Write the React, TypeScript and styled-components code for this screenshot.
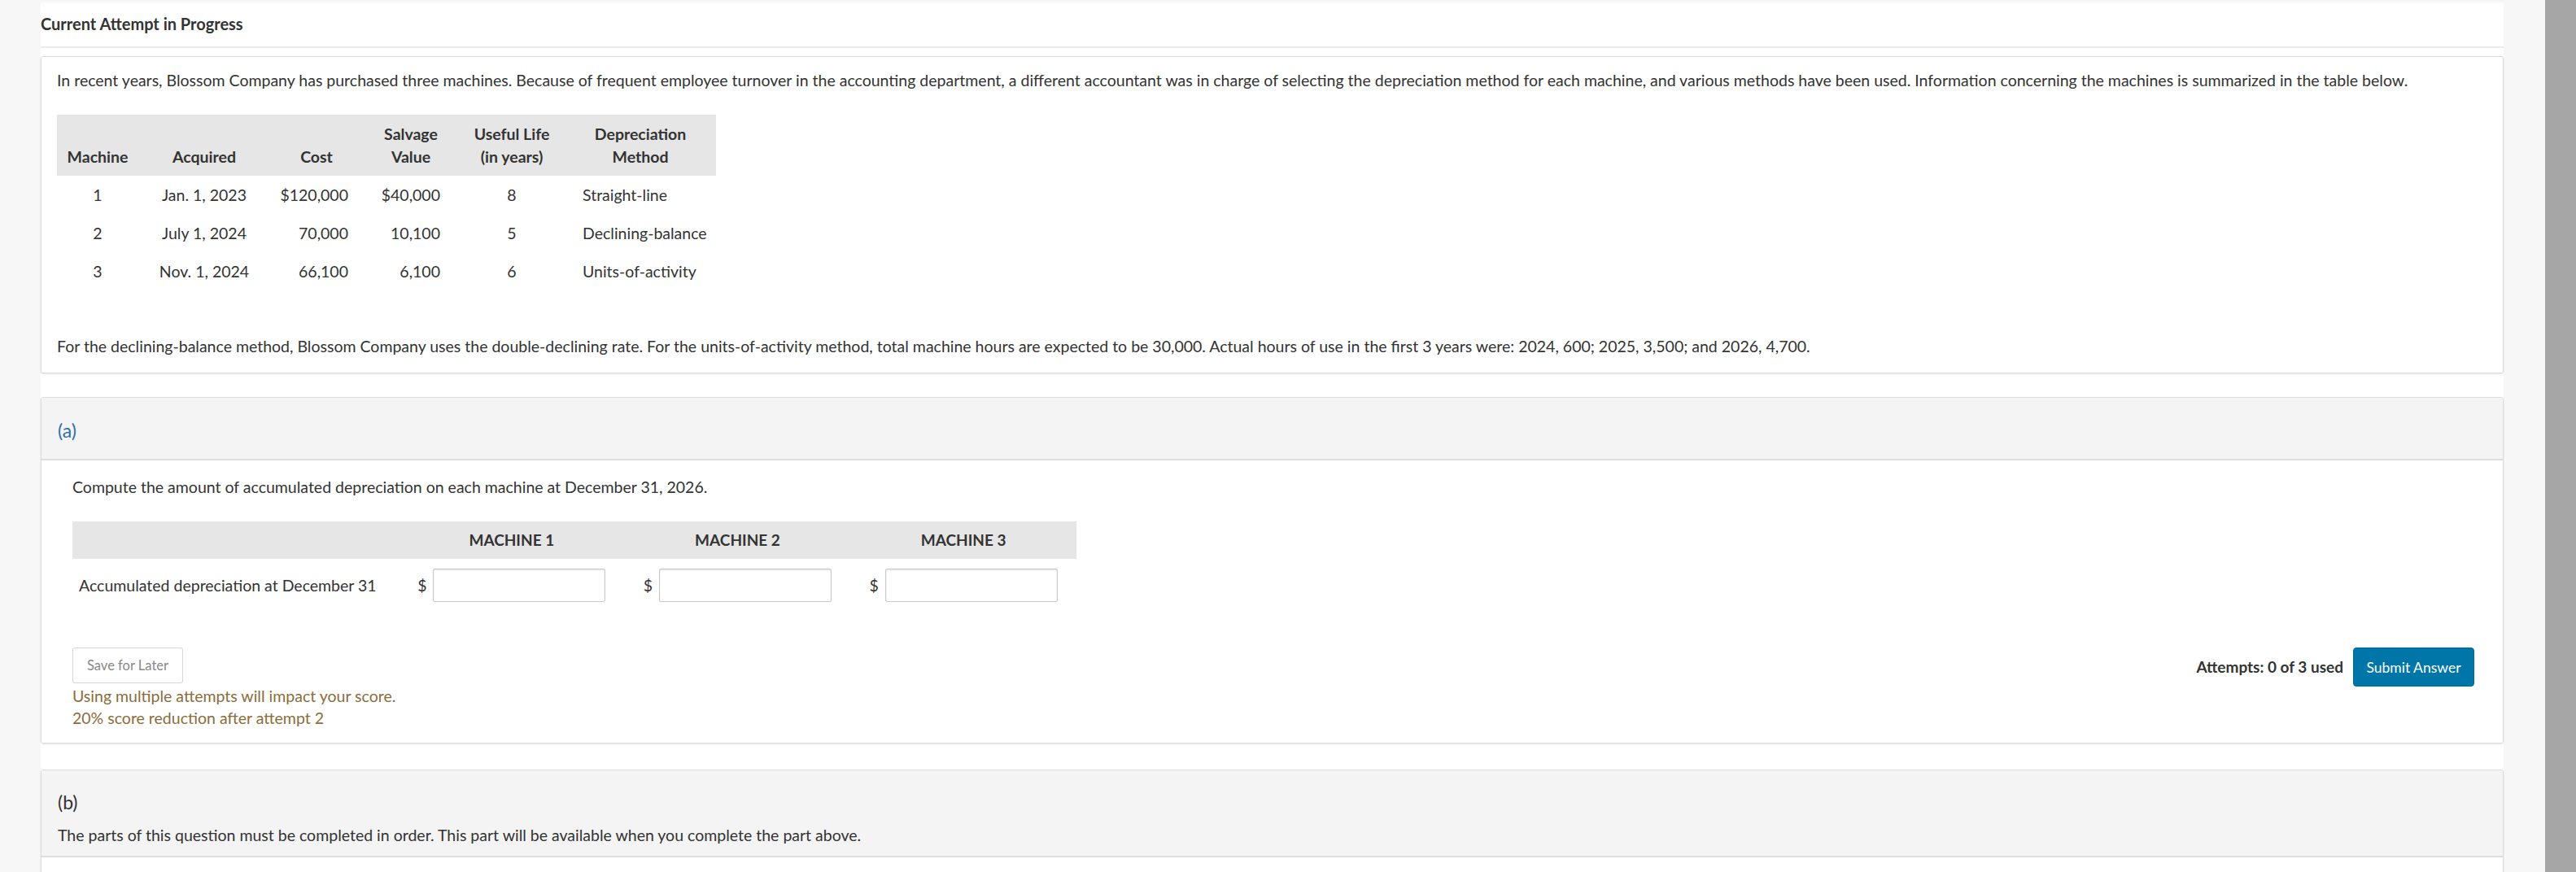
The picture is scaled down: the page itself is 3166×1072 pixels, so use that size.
import React from "react";
import styled, { createGlobalStyle } from "styled-components";

const GlobalStyle = createGlobalStyle`
  html, body {
    margin: 0;
    padding: 0;
    height: 100%;
    overflow: hidden;
    background: #f7f7f7;
  }
  body {
    font-family: Lato, "Open Sans", Arial, sans-serif;
    color: #333;
    font-size: 19.5px;
    line-height: 28px;
  }
  * {
    box-sizing: border-box;
  }
`;

const machines = [
  { machine: "1", acquired: "Jan. 1, 2023", cost: "$120,000", salvage: "$40,000", life: "8", method: "Straight-line" },
  { machine: "2", acquired: "July 1, 2024", cost: "70,000", salvage: "10,100", life: "5", method: "Declining-balance" },
  { machine: "3", acquired: "Nov. 1, 2024", cost: "66,100", salvage: "6,100", life: "6", method: "Units-of-activity" },
];

type Col = {
  key: keyof (typeof machines)[number];
  label: string[];
  width: number;
  align: "left" | "center" | "right";
  pl?: number;
  pr?: number;
};

const columns: Col[] = [
  { key: "machine", label: ["Machine"], width: 100, align: "center" },
  { key: "acquired", label: ["Acquired"], width: 162, align: "center" },
  { key: "cost", label: ["Cost"], width: 114, align: "right", pr: 18 },
  { key: "salvage", label: ["Salvage", "Value"], width: 118, align: "right", pr: 23 },
  { key: "life", label: ["Useful Life", "(in years)"], width: 130, align: "center" },
  { key: "method", label: ["Depreciation", "Method"], width: 186, align: "left", pl: 22 },
];

const answerCols = ["MACHINE 1", "MACHINE 2", "MACHINE 3"];

const App = () => {
  return (
    <>
      <GlobalStyle />
      <Shell>
        <Column>
          <PageHeader>Current Attempt in Progress</PageHeader>

          <Card>
            <Paragraph>
              In recent years, Blossom Company has purchased three machines. Because of frequent employee turnover in the
              accounting department, a different accountant was in charge of selecting the depreciation method for each
              machine, and various methods have been used. Information concerning the machines is summarized in the table
              below.
            </Paragraph>

            <DataTable>
              <colgroup>
                {columns.map((c) => (
                  <col key={c.key} style={{ width: c.width }} />
                ))}
              </colgroup>
              <thead>
                <tr>
                  {columns.map((c) => (
                    <HeadCell key={c.key}>
                      {c.label.map((l) => (
                        <div key={l}>{l}</div>
                      ))}
                    </HeadCell>
                  ))}
                </tr>
              </thead>
              <tbody>
                {machines.map((m) => (
                  <tr key={m.machine}>
                    {columns.map((c) => (
                      <BodyCell key={c.key} $align={c.align} $pl={c.pl ?? 4} $pr={c.pr ?? 4}>
                        {m[c.key]}
                      </BodyCell>
                    ))}
                  </tr>
                ))}
              </tbody>
            </DataTable>

            <Paragraph>
              For the declining-balance method, Blossom Company uses the double-declining rate. For the units-of-activity
              method, total machine hours are expected to be 30,000. Actual hours of use in the first 3 years were: 2024,
              600; 2025, 3,500; and 2026, 4,700.
            </Paragraph>
          </Card>

          <PartCard>
            <PartHeader>
              <PartLabel $active>(a)</PartLabel>
            </PartHeader>
            <PartBody>
              <Prompt>Compute the amount of accumulated depreciation on each machine at December 31, 2026.</Prompt>

              <AnswerTable>
                <thead>
                  <tr>
                    <AnswerHead style={{ width: 401 }} />
                    {answerCols.map((c) => (
                      <AnswerHead key={c}>{c}</AnswerHead>
                    ))}
                  </tr>
                </thead>
                <tbody>
                  <tr>
                    <RowLabel>Accumulated depreciation at December 31</RowLabel>
                    {answerCols.map((c) => (
                      <InputCell key={c}>
                        <InputGroup>
                          <Dollar>$</Dollar>
                          <AmountInput type="text" aria-label={c} />
                        </InputGroup>
                      </InputCell>
                    ))}
                  </tr>
                </tbody>
              </AnswerTable>

              <ActionRow>
                <LeftActions>
                  <SaveButton>Save for Later</SaveButton>
                  <Warning>
                    Using multiple attempts will impact your score.
                    <br />
                    20% score reduction after attempt 2
                  </Warning>
                </LeftActions>
                <RightActions>
                  <AttemptsText>Attempts: 0 of 3 used</AttemptsText>
                  <SubmitButton>Submit Answer</SubmitButton>
                </RightActions>
              </ActionRow>
            </PartBody>
          </PartCard>

          <PartCard $gap={32}>
            <PartHeader $locked>
              <PartLabel>(b)</PartLabel>
              <LockedNote>
                The parts of this question must be completed in order. This part will be available when you complete the
                part above.
              </LockedNote>
            </PartHeader>
            <PartBody style={{ minHeight: 120 }} />
          </PartCard>
        </Column>
        <ScrollTrack />
      </Shell>
    </>
  );
};

const Shell = styled.div`
  display: flex;
  height: 1072px;
  overflow: hidden;
  padding-left: 50px;
  background: #f7f7f7;
`;

const Column = styled.main`
  width: 3027px;
  flex-shrink: 0;
  background: #fff;
  margin-right: 51px;
  box-shadow: inset 0 7px 6px -6px rgba(0, 0, 0, 0.08);
`;

const ScrollTrack = styled.div`
  width: 38px;
  flex-shrink: 0;
  background: #a6a6a6;
`;

const PageHeader = styled.h1`
  margin: 0;
  padding: 15px 0 14px 0;
  font-size: 20px;
  line-height: 28px;
  font-weight: 700;
  color: #333;
  border-bottom: 2px solid #ebebeb;
`;

const Card = styled.section`
  margin-top: 10px;
  border: 1px solid #dcdcdc;
  border-radius: 3px;
  box-shadow: 0 1px 2px rgba(0, 0, 0, 0.12);
  padding: 15px 19px 18px 19px;
`;

const Paragraph = styled.p`
  margin: 0;
  color: #333;
`;

const DataTable = styled.table`
  margin: 28px 0 55px 0;
  border-collapse: collapse;
  table-layout: fixed;
  width: 810px;
  color: #333;
`;

const HeadCell = styled.th`
  background: #e6e6e6;
  font-weight: 700;
  text-align: center;
  vertical-align: bottom;
  padding: 10px 2px 9px 2px;
`;

const BodyCell = styled.td<{ $align: string; $pl: number; $pr: number }>`
  text-align: ${({ $align }) => $align};
  padding: 9.5px ${({ $pr }) => $pr}px 9.5px ${({ $pl }) => $pl}px;
  white-space: nowrap;
`;

const PartCard = styled.section<{ $gap?: number }>`
  margin-top: ${({ $gap }) => $gap ?? 29}px;
  border: 1px solid #dcdcdc;
  border-radius: 3px;
  box-shadow: 0 1px 2px rgba(0, 0, 0, 0.12);
  overflow: hidden;
`;

const PartHeader = styled.header<{ $locked?: boolean }>`
  background: #f4f4f4;
  border-bottom: 2px solid #dedede;
  padding: ${({ $locked }) => ($locked ? "24px 20px 11px 20px" : "25px 20px 20px 20px")};
`;

const PartLabel = styled.div<{ $active?: boolean }>`
  font-size: 23px;
  line-height: 30px;
  color: ${({ $active }) => ($active ? "#2f6ea8" : "#333")};
`;

const LockedNote = styled.div`
  margin-top: 12px;
  color: #333;
`;

const PartBody = styled.div`
  padding: 19px 35px 17px 38px;
  background: #fff;
`;

const Prompt = styled.p`
  margin: 0 0 28px 0;
`;

const AnswerTable = styled.table`
  border-collapse: collapse;
  width: 1234px;
  table-layout: fixed;
`;

const AnswerHead = styled.th`
  background: #e6e6e6;
  height: 46px;
  font-size: 19px;
  font-weight: 700;
  text-align: center;
  color: #333;
  padding: 0;
`;

const RowLabel = styled.td`
  padding: 12px 8px;
  white-space: nowrap;
`;

const InputCell = styled.td`
  padding: 12px 0;
`;

const InputGroup = styled.div`
  display: flex;
  align-items: center;
  justify-content: center;
  gap: 8px;
`;

const Dollar = styled.span`
  color: #333;
`;

const AmountInput = styled.input`
  width: 212px;
  height: 41px;
  border: 1px solid #c9c9c9;
  border-radius: 2px;
  box-shadow: inset 0 1px 2px rgba(0, 0, 0, 0.12);
  font-family: inherit;
  font-size: 19px;
  padding: 0 8px;
`;

const ActionRow = styled.div`
  display: flex;
  justify-content: space-between;
  align-items: flex-start;
  margin-top: 44px;
`;

const LeftActions = styled.div`
  display: flex;
  flex-direction: column;
  align-items: flex-start;
`;

const SaveButton = styled.button`
  height: 44px;
  width: 136px;
  padding: 0;
  background: #fff;
  border: 1px solid #d6d6d6;
  border-radius: 3px;
  font-family: inherit;
  font-size: 16.5px;
  color: #888;
`;

const Warning = styled.div`
  margin-top: 2px;
  line-height: 27px;
  color: #8a6d3b;
`;

const RightActions = styled.div`
  display: flex;
  align-items: center;
  gap: 12px;
`;

const AttemptsText = styled.span`
  font-size: 19px;
  font-weight: 700;
  color: #333;
`;

const SubmitButton = styled.button`
  height: 48px;
  width: 149px;
  padding: 0;
  background: #0076a8;
  border: 1px solid #006a98;
  border-radius: 4px;
  font-family: inherit;
  font-size: 17.5px;
  color: #fff;
`;

export default App;
